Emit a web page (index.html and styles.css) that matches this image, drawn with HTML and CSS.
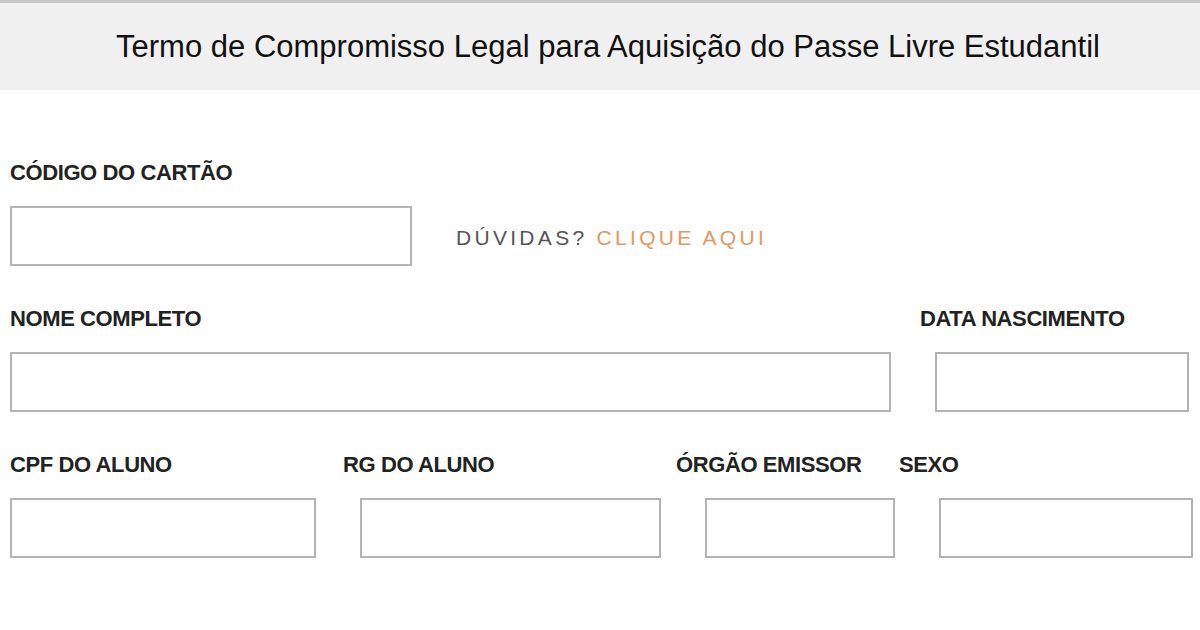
FILE: index.html
```html
<!DOCTYPE html>
<html lang="pt-BR">
<head>
    <meta charset="UTF-8">
    <meta name="viewport" content="width=device-width, initial-scale=1.0">
    <title>Termo de Compromisso Legal - Passe Livre Estudantil</title>
    <link rel="stylesheet" href="styles.css">
</head>
<body>

    <div class="header">
        <h1>Termo de Compromisso Legal para Aquisição do Passe Livre Estudantil</h1>
    </div>

    <form class="form">
        <!-- Código do cartão -->
        <div class="row">
            <div class="field">
                <label for="codigo">CÓDIGO DO CARTÃO</label>
                <input type="text" id="codigo" class="w-codigo">
            </div>
            <div class="duvidas">DÚVIDAS? <a href="#">CLIQUE AQUI</a></div>
        </div>

        <!-- Nome e data -->
        <div class="row">
            <div class="field">
                <label for="nome">NOME COMPLETO</label>
                <input type="text" id="nome" class="w-nome">
            </div>
            <div class="field field-data">
                <label for="nascimento">DATA NASCIMENTO</label>
                <input type="text" id="nascimento" class="w-data">
            </div>
        </div>

        <!-- Documentos -->
        <div class="row">
            <div class="field field-cpf">
                <label for="cpf">CPF DO ALUNO</label>
                <input type="text" id="cpf" class="w-cpf">
            </div>
            <div class="field field-rg">
                <label for="rg">RG DO ALUNO</label>
                <input type="text" id="rg" class="w-rg">
            </div>
            <div class="field field-orgao">
                <label for="orgao">ÓRGÃO EMISSOR</label>
                <input type="text" id="orgao" class="w-orgao">
            </div>
            <div class="field field-sexo">
                <label for="sexo">SEXO</label>
                <input type="text" id="sexo" class="w-sexo">
            </div>
        </div>
    </form>

</body>
</html>
```

FILE: styles.css
```css
html, body {
    margin: 0;
    background-color: #fff;
    font-family: "Liberation Sans", Arial, sans-serif;
}

/* Grey title band */
.header {
    border-top: 3px solid #c8c8c8;
    background-color: #f0f0f0;
    height: 87px;
    padding-left: 16px;
    display: flex;
    align-items: center;
    justify-content: center;
}

.header h1 {
    margin: 0;
    font-size: 31px;
    font-weight: normal;
    color: #111;
}

.form {
    padding: 70px 0 0 10px;
}

.row {
    display: flex;
    align-items: flex-end;
    margin-bottom: 40px;
}

.field {
    display: flex;
    flex-direction: column;
}

label {
    font-size: 22px;
    font-weight: bold;
    letter-spacing: -0.4px;
    color: #222;
    line-height: 26px;
    margin-bottom: 20px;
}

input {
    box-sizing: border-box;
    height: 60px;
    border: 2px solid #b4b4b4;
    background: #fff;
    margin: 0;
}

/* Input widths */
.w-codigo { width: 402px; }
.w-nome { width: 881px; }
.w-data { width: 254px; margin-left: 15px; }
.w-cpf { width: 306px; }
.w-rg { width: 301px; margin-left: 17px; }
.w-orgao { width: 190px; margin-left: 29px; }
.w-sexo { width: 254px; margin-left: 40px; }

.field-data { margin-left: 29px; }
.field-rg { margin-left: 27px; }
.field-orgao { margin-left: 15px; }
.field-sexo { margin-left: 4px; }

.duvidas {
    margin-left: 44px;
    height: 60px;
    line-height: 64px;
    font-size: 21px;
    letter-spacing: 3.3px;
    color: #555;
}

.duvidas a {
    color: #e9955c;
    text-decoration: none;
}
```
